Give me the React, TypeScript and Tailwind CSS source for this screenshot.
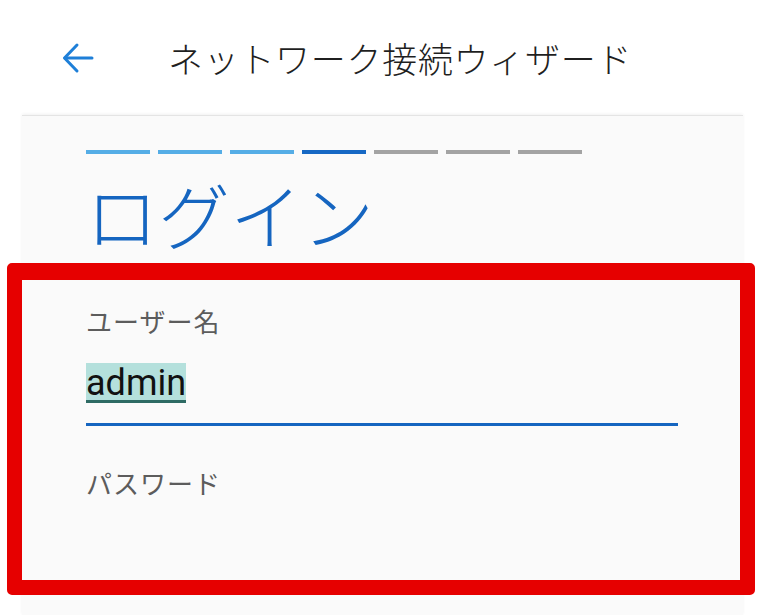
export default function App() {
  const steps = ['done', 'done', 'done', 'current', 'todo', 'todo', 'todo']

  return (
    <div className="relative w-[768px] h-[615px] overflow-hidden bg-white font-['Noto_Sans_CJK_JP','Noto_Sans',sans-serif]">
      {/* Header */}
      <header className="flex h-[115px] items-center pl-[62px]">
        <button aria-label="戻る" className="flex h-8 w-8 items-center justify-center">
          <svg viewBox="0 0 32 32" className="h-8 w-8" fill="none" stroke="#1e7fd8" strokeWidth="3" strokeLinecap="round" strokeLinejoin="round">
            <path d="M30 16H3" />
            <path d="M15 3L2.5 16L15 29" />
          </svg>
        </button>
        <h1 className="ml-[74px] text-[35px] font-light leading-none tracking-[0.7px] text-[#1f1f1f]">
          ネットワーク接続ウィザード
        </h1>
      </header>

      {/* Wizard panel */}
      <main className="mx-[22px] h-[500px] w-[721px] border-t border-[#e4e4e4] bg-[#fafafa] pl-[64px] pt-[34px] shadow-[0_-1px_3px_rgba(0,0,0,0.06)]">
        <div className="flex gap-2">
          {steps.map((s, i) => (
            <div
              key={i}
              className={`h-1 w-16 ${
                s === 'done' ? 'bg-[#55ade6]' : s === 'current' ? 'bg-[#1668c4]' : 'bg-[#a3a3a3]'
              }`}
            />
          ))}
        </div>

        <h2 className="mt-[23px] text-[72px] font-light leading-none text-[#1565c0]">ログイン</h2>

        <div className="mt-[59px] w-[592px]">
          <label className="block text-[26px] leading-none tracking-[1px] text-[#5c5c5c]">ユーザー名</label>
          <div className="mt-[29px] pb-[20px] border-b-[3px] border-[#1565c0]">
            <span className="inline-block bg-[#b4e0dc] font-['Roboto',sans-serif] text-[36px] leading-[40px] text-[#111111] shadow-[inset_0_-3px_0_#2e6b64]">
              admin
            </span>
          </div>
          <label className="mt-[44px] block text-[26px] leading-none tracking-[1px] text-[#5c5c5c]">パスワード</label>
        </div>
      </main>

      {/* Red highlight annotation */}
      <div className="pointer-events-none absolute left-[7px] top-[263px] h-[332px] w-[748px] rounded-[5px] border-[15px] border-t-[17px] border-[#e60000]" />
    </div>
  )
}
